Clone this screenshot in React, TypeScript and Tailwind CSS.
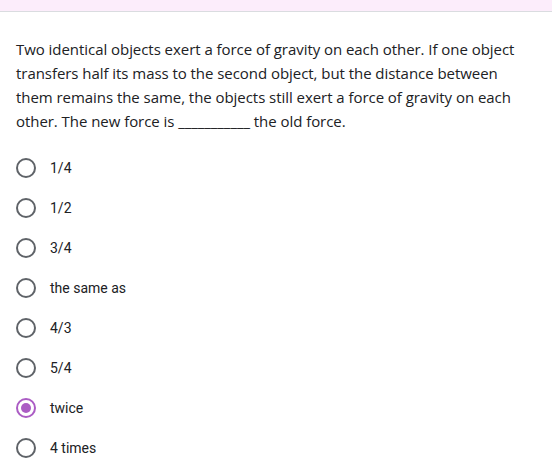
const options = ["1/4", "1/2", "3/4", "the same as", "4/3", "5/4", "twice", "4 times"];

export default function App() {
  const selected = "twice";
  return (
    <div className="w-[552px] h-[471px] bg-white overflow-hidden">
      <div className="h-3 bg-[#fcedfb] border-b border-[#dadce0]" />
      <div className="pl-4 pr-1 pt-[25px]">
        <p className="text-[15px] leading-6 text-[#202124] font-['Open_Sans',sans-serif] tracking-[-0.05px] whitespace-nowrap">
          Two identical objects exert a force of gravity on each other. If one object
          <br />
          transfers half its mass to the second object, but the distance between
          <br />
          them remains the same, the objects still exert a force of gravity on each
          <br />
          other. The new force is ___________ the old force.
        </p>
        <div className="mt-[15px] flex flex-col">
          {options.map((o) => {
            const on = o === selected;
            return (
              <div key={o} className="h-10 flex items-center">
                <span
                  className={
                    on
                      ? "w-5 h-5 rounded-full border-2 border-[#ab5cc4] flex items-center justify-center"
                      : "w-5 h-5 rounded-full border-2 border-[#5f6368] flex items-center justify-center"
                  }
                >
                  {on && <span className="w-2.5 h-2.5 rounded-full bg-[#ab5cc4]" />}
                </span>
                <span className="ml-[14px] text-sm text-[#202124] font-['Roboto',sans-serif]">{o}</span>
              </div>
            );
          })}
        </div>
      </div>
    </div>
  );
}
